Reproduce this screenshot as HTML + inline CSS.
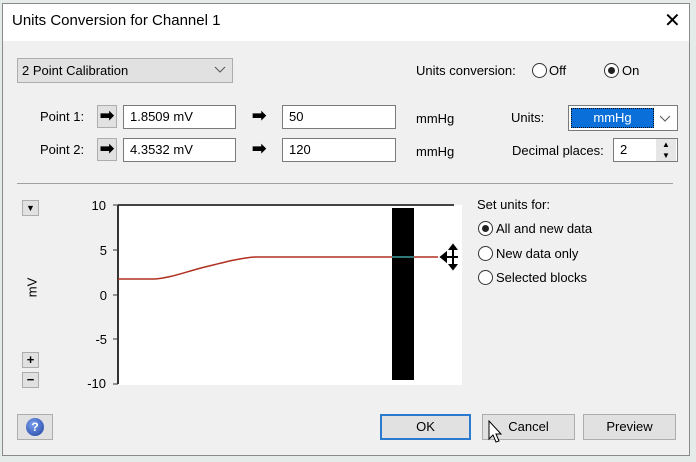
<!DOCTYPE html>
<html><head><meta charset="utf-8"><style>
*{box-sizing:border-box;margin:0;padding:0}
body{width:696px;height:462px;background:#e4ebe8;position:relative;overflow:hidden;font-family:"Liberation Sans",sans-serif;font-size:13px;color:#000}
.a{position:absolute}
.dlg{left:2px;top:3px;width:688px;height:453px;background:#f0f0f0;border:1px solid #8a8a8a}
.title{left:0;top:0;width:686px;height:37px;background:#fff}
.inp{background:#fff;border:1px solid #7a7a7a;padding-left:6px;line-height:22px}
.btn{background:#e1e1e1;border:1px solid #adadad;text-align:center;line-height:24px}
.rad{width:15px;height:15px;border:1px solid #333;border-radius:50%;background:#fff}
.rad.on::after{content:"";position:absolute;left:3px;top:3px;width:7px;height:7px;border-radius:50%;background:#222}
.sb{width:17px;height:16px;background:#e1e1e1;border:1px solid #adadad;font-size:13px;font-weight:bold;text-align:center;line-height:13px}
.yl{font-size:13px;text-align:right;width:30px}
.ar{font-size:17px;font-weight:bold}
</style></head><body>
<div class="a dlg">
 <div class="a title"></div>
</div>
<div class="a" style="left:12px;top:12px;font-size:15px">Units Conversion for Channel 1</div>
<div class="a" style="left:664px;top:8px;font-size:20px;font-weight:300">✕</div>

<div class="a" style="left:17px;top:58px;width:216px;height:25px;background:#e1e1e1;border:1px solid #adadad;padding-left:4px;line-height:23px">2 Point Calibration</div>
<svg class="a" style="left:214px;top:66px" width="12" height="8"><path d="M1 1L6 6L11 1" stroke="#555" fill="none"/></svg>

<div class="a" style="left:416px;top:63px">Units conversion:</div>
<div class="a rad" style="left:532px;top:63px"></div><div class="a" style="left:549px;top:63px">Off</div>
<div class="a rad on" style="left:604px;top:63px"></div><div class="a" style="left:622px;top:63px">On</div>

<div class="a" style="left:40px;top:109px">Point 1:</div>
<div class="a" style="left:40px;top:142px">Point 2:</div>
<div class="a btn ar" style="left:97px;top:105px;width:20px;height:23px;line-height:20px">➡</div>
<div class="a btn ar" style="left:97px;top:138px;width:20px;height:23px;line-height:20px">➡</div>
<div class="a inp" style="left:123px;top:105px;width:113px;height:24px">1.8509 mV</div>
<div class="a inp" style="left:123px;top:138px;width:113px;height:24px">4.3532 mV</div>
<div class="a ar" style="left:252px;top:106px">➡</div>
<div class="a ar" style="left:252px;top:139px">➡</div>
<div class="a inp" style="left:282px;top:105px;width:114px;height:24px">50</div>
<div class="a inp" style="left:282px;top:138px;width:114px;height:24px">120</div>
<div class="a" style="left:416px;top:111px">mmHg</div>
<div class="a" style="left:416px;top:144px">mmHg</div>
<div class="a" style="left:511px;top:110px">Units:</div>
<div class="a" style="left:512px;top:143px">Decimal places:</div>
<div class="a" style="left:568px;top:105px;width:110px;height:26px;background:#fff;border:1px solid #7a7a7a"></div>
<div class="a" style="left:571px;top:108px;width:83px;height:20px;background:#0a6fd8;border:1px dotted #111;color:#fff;text-align:center;line-height:18px">mmHg</div>
<svg class="a" style="left:659px;top:115px" width="12" height="8"><path d="M1 1L6 6L11 1" stroke="#555" fill="none"/></svg>
<div class="a inp" style="left:613px;top:138px;width:65px;height:24px">2</div>
<div class="a" style="left:656px;top:139px;width:20px;height:22px;background:#e6e6e6;font-size:8px;line-height:11px;text-align:center">▲<br>▼</div>

<div class="a" style="left:17px;top:183px;width:656px;height:1px;background:#a0a0a0"></div>

<div class="a sb" style="left:22px;top:200px;font-size:9px;line-height:14px">▼</div>
<div class="a sb" style="left:22px;top:352px">+</div>
<div class="a sb" style="left:22px;top:372px">−</div>
<div class="a" style="left:22px;top:280px;transform:rotate(-90deg);font-size:13px">mV</div>

<div class="a yl" style="left:76px;top:198px">10</div>
<div class="a yl" style="left:77px;top:243px">5</div>
<div class="a yl" style="left:77px;top:288px">0</div>
<div class="a yl" style="left:77px;top:332px">-5</div>
<div class="a yl" style="left:76px;top:376px">-10</div>

<svg class="a" style="left:110px;top:200px" width="360" height="190">
 <rect x="8" y="5" width="344" height="180" fill="#fff"/>
 <path d="M8 5H344" stroke="#444" stroke-width="2"/>
 <path d="M8 5V184" stroke="#333" stroke-width="2"/>
 <path d="M3 5H8M3 50H8M3 95H8M3 139H8M3 184H8" stroke="#333"/>
 <rect x="282" y="8" width="22" height="172" fill="#000"/>
 <path d="M8 79H45C60 78 75 72 95 67C115 62 130 58 145 57H282" stroke="#b03020" stroke-width="1.5" fill="none"/>
 <path d="M282 57H304" stroke="#40a0a0" stroke-width="1.5"/>
 <path d="M304 57H328" stroke="#b03020" stroke-width="1.5"/>
 <path d="M331 57H348M331 57L336 53V61ZM343 47V67M340 49L343 45L346 49ZM340 65L343 69L346 65Z" stroke="#000" stroke-width="2" fill="#000"/>
</svg>

<div class="a" style="left:477px;top:197px">Set units for:</div>
<div class="a rad on" style="left:478px;top:221px"></div><div class="a" style="left:496px;top:221px">All and new data</div>
<div class="a rad" style="left:478px;top:246px"></div><div class="a" style="left:496px;top:246px">New data only</div>
<div class="a rad" style="left:478px;top:270px"></div><div class="a" style="left:496px;top:270px">Selected blocks</div>

<div class="a btn" style="left:17px;top:414px;width:36px;height:26px"></div>
<div class="a" style="left:26px;top:418px;width:18px;height:18px;border-radius:50%;background:radial-gradient(circle at 40% 35%,#7aa0f0,#1f3f9f);color:#fff;font-weight:bold;font-size:12px;text-align:center;line-height:18px">?</div>

<div class="a btn" style="left:380px;top:414px;width:91px;height:26px;border:2px solid #2a7ad0;line-height:22px">OK</div>
<div class="a btn" style="left:482px;top:414px;width:93px;height:26px">Cancel</div>
<div class="a btn" style="left:583px;top:414px;width:93px;height:26px">Preview</div>
<svg class="a" style="left:488px;top:420px" width="16" height="24"><path d="M1 1V19L5 15L8 22L11 21L8 14H13Z" fill="#fff" stroke="#000"/></svg>
</body></html>
